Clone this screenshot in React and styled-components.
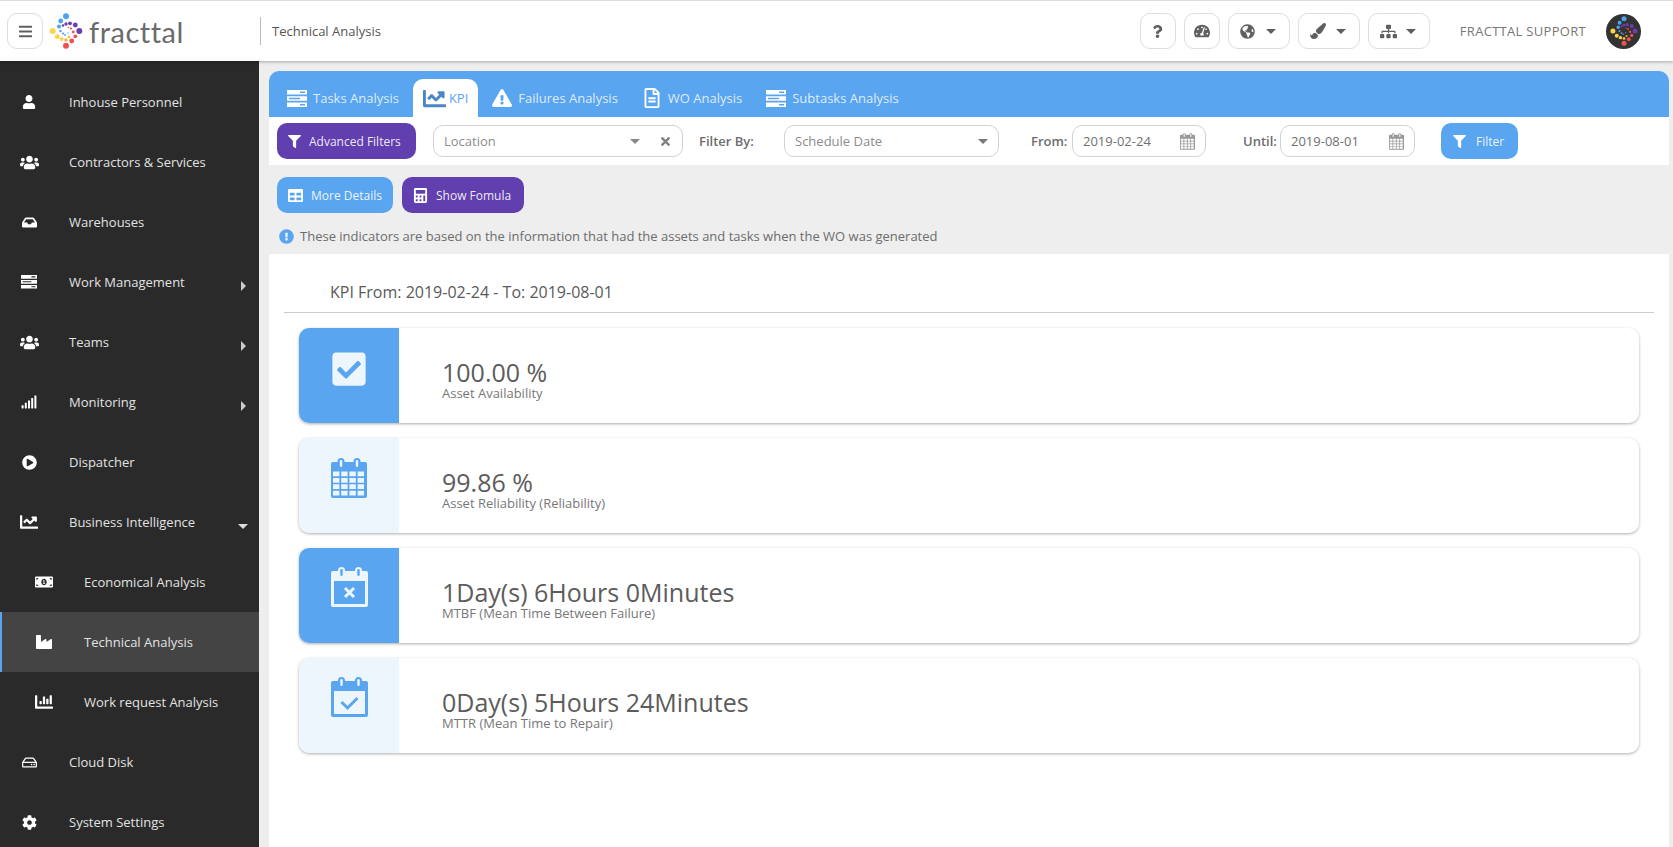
import React from 'react'
import styled, { createGlobalStyle } from 'styled-components'
import {
    FaBars, FaQuestion, FaTachometerAlt, FaGlobeAmericas, FaPaintBrush, FaSitemap, FaUser, FaUsers, FaInbox,
    FaSignal, FaPlayCircle, FaChartLine, FaMoneyBillAlt, FaIndustry, FaChartBar, FaRegHdd, FaCog, FaFilter,
    FaTimes, FaTable, FaCalculator, FaExclamationCircle, FaCheckSquare, FaExclamationTriangle, FaRegFileAlt
} from 'react-icons/fa'

const BLUE = '#5aa5f0'
const PURPLE = '#613fae'
const PALE = '#edf5fd'
const FONT = '"Open Sans", "Liberation Sans", sans-serif'

const GlobalStyle = createGlobalStyle`
    html, body { margin: 0; padding: 0; height: 100%; background: #eee; }
    body { font-family: ${FONT}; color: #666; overflow: hidden; }
    * { box-sizing: border-box; }
`

const Page = styled.div`
    width: 100vw;
    height: 100vh;
    display: flex;
    flex-direction: column;
    overflow: hidden;
`

const Header = styled.header`
    height: 61px;
    flex-shrink: 0;
    display: flex;
    align-items: center;
    background: #fff;
    border-top: 1px solid #ddd;
    padding: 0 32px 0 7px;
    box-shadow: 0 1px 3px rgba(0, 0, 0, .3);
    position: relative;
    z-index: 2;
`

const Brand = styled.div`
    width: 253px;
    display: flex;
    align-items: center;
`

const HeadButton = styled.button`
    height: 36px;
    width: ${({$w}) => $w || 36}px;
    display: flex;
    align-items: center;
    justify-content: ${({$w}) => $w ? 'space-between' : 'center'};
    padding: ${({$w}) => $w ? '0 13px 0 11px' : '0'};
    background: #fff;
    border: 1px solid #ddd;
    border-radius: 10px;
    color: #5f5f5f;
    flex-shrink: 0;
`

const LogoMark = styled.svg`
    width: ${({$size}) => $size}px;
    height: ${({$size}) => $size}px;
    flex-shrink: 0;
`

const LogoWrap = styled.div`
    margin-left: 5px;
    display: flex;
    align-items: center;
`

const LogoText = styled.span`
    margin-left: 5px;
    font-family: "Lato", sans-serif;
    font-size: 29px;
    font-weight: 400;
    color: #6b6b6b;
    line-height: 1;
    letter-spacing: .5px;
`

const PageTitle = styled.div`
    height: 28px;
    display: flex;
    align-items: center;
    border-left: 1px solid #bbb;
    padding-left: 11px;
    font-size: 13px;
    color: #555;
`

const HeadRight = styled.div`
    margin-left: auto;
    display: flex;
    align-items: center;
    gap: 8px;
`

const UserName = styled.span`
    margin-left: 22px;
    font-size: 13px;
    color: #777;
    letter-spacing: .3px;
`

const Avatar = styled.div`
    width: 35px;
    height: 35px;
    margin-left: 12px;
    border-radius: 50%;
    background: #333;
    display: flex;
    align-items: center;
    justify-content: center;
`

const Caret = styled.i`
    display: block;
    width: 0;
    height: 0;
    border-left: 5px solid transparent;
    border-right: 5px solid transparent;
    border-top: 5px solid ${({$color}) => $color || '#5f5f5f'};
`

const Body = styled.div`
    flex: 1;
    min-height: 0;
    display: flex;
`

const Sidebar = styled.nav`
    width: 259px;
    flex-shrink: 0;
    background: #2a2a2a;
    padding-top: 11px;
    overflow: hidden;
`

const NavItem = styled.div`
    height: 60px;
    display: flex;
    align-items: center;
    padding-left: ${({$sub}) => $sub ? 15 : 0}px;
    color: #e2e2e2;
    font-size: 13px;
    background: ${({$active}) => $active ? '#444' : 'transparent'};
    box-shadow: ${({$active}) => $active ? `inset 2px 0 0 ${BLUE}` : 'none'};
`

const NavIcon = styled.span`
    width: 58px;
    margin-right: 11px;
    display: flex;
    justify-content: center;
    color: #fff;
    flex-shrink: 0;
`

const ArrowRight = styled.i`
    margin: 8px 13px 0 auto;
    width: 0;
    height: 0;
    border-top: 5px solid transparent;
    border-bottom: 5px solid transparent;
    border-left: 5px solid #ccc;
`

const ArrowDown = styled.i`
    margin: 8px 11px 0 auto;
    width: 0;
    height: 0;
    border-left: 5px solid transparent;
    border-right: 5px solid transparent;
    border-top: 5px solid #ddd;
`

const Main = styled.main`
    flex: 1;
    min-width: 0;
    padding: 10px 4px 0 10px;
    display: flex;
    flex-direction: column;
`

const TabBar = styled.div`
    height: 46px;
    flex-shrink: 0;
    background: ${BLUE};
    border-radius: 10px 10px 0 0;
    padding-left: 8px;
    display: flex;
    align-items: flex-end;
    gap: 4px;
`

const Tab = styled.div`
    height: 38px;
    padding: 0 10px;
    display: flex;
    align-items: center;
    gap: ${({$active}) => $active ? 3 : 6}px;
    font-size: 13px;
    border-radius: 10px 10px 0 0;
    background: ${({$active}) => $active ? '#fff' : 'transparent'};
    color: ${({$active}) => $active ? BLUE : 'rgba(255, 255, 255, .8)'};
    svg { color: ${({$active}) => $active ? '#4a86c5' : '#fff'}; flex-shrink: 0; }
`

const FilterBar = styled.div`
    height: 48px;
    flex-shrink: 0;
    background: #fff;
    padding-left: 8px;
    display: flex;
    align-items: center;
`

const ActionButton = styled.button`
    height: 36px;
    width: ${({$w}) => $w}px;
    padding: 0 0 0 ${({$pad}) => $pad || 11}px;
    display: flex;
    align-items: center;
    gap: ${({$gap}) => $gap || 8}px;
    border: 0;
    border-radius: 10px;
    background: ${({$purple}) => $purple ? PURPLE : BLUE};
    color: rgba(255, 255, 255, .9);
    font-family: ${FONT};
    font-size: 12px;
    flex-shrink: 0;
    svg { color: #fff; flex-shrink: 0; }
`

const Field = styled.div`
    height: 32px;
    width: ${({$w}) => $w}px;
    margin-left: ${({$ml}) => $ml || 0}px;
    padding: 0 10px;
    display: flex;
    align-items: center;
    border: 1px solid #d2d2d2;
    border-radius: 10px;
    font-size: 13px;
    color: ${({$muted}) => $muted ? '#8c8c8c' : '#707070'};
    flex-shrink: 0;
`

const FieldText = styled.span`
    flex: 1;
`

const FieldClear = styled.span`
    display: flex;
    margin-left: 19px;
    color: #808080;
`

const FilterLabel = styled.label`
    margin-left: ${({$ml}) => $ml}px;
    width: ${({$w}) => $w}px;
    font-size: 13px;
    font-weight: 600;
    color: #6d6d6d;
    flex-shrink: 0;
`

const InfoArea = styled.section`
    height: 89px;
    flex-shrink: 0;
    background: #eee;
    padding: 12px 0 0 8px;
`

const ButtonRow = styled.div`
    display: flex;
    gap: 9px;
`

const InfoLine = styled.p`
    margin: 14px 0 0 2px;
    display: flex;
    align-items: center;
    gap: 6px;
    font-size: 13px;
    line-height: 18px;
    color: #6c6c6c;
    svg { color: ${BLUE}; }
`

const Report = styled.section`
    flex: 1;
    min-height: 0;
    background: #fff;
`

const ReportTitle = styled.h2`
    margin: 0 15px;
    height: 59px;
    padding: 27px 0 0 46px;
    border-bottom: 1px solid #ccc;
    font-size: 16px;
    line-height: 22px;
    font-weight: 500;
    color: #5a5a5a;
`

const CardList = styled.div`
    padding: 15px 30px 0;
    display: flex;
    flex-direction: column;
    gap: 15px;
`

const Card = styled.article`
    height: 95px;
    display: flex;
    border-radius: 10px;
    background: #fff;
    overflow: hidden;
    box-shadow: 0 1px 3px rgba(0, 0, 0, .32);
`

const CardIcon = styled.div`
    width: 100px;
    flex-shrink: 0;
    padding-top: ${({$top}) => $top}px;
    display: flex;
    justify-content: center;
    background: ${({$solid}) => $solid ? BLUE : PALE};
    color: ${({$solid}) => $solid ? PALE : BLUE};
`

const CardBody = styled.div`
    padding: 8px 0 0 43px;
    display: flex;
    flex-direction: column;
    justify-content: center;
`

const CardValue = styled.div`
    font-size: 25px;
    line-height: 28px;
    font-weight: 400;
    color: #5c5c5c;
`

const CardLabel = styled.div`
    font-size: 13px;
    line-height: 15px;
    color: #777;
`

const DOTS = [
    [0, -14.7, 3, '#4ea3ee'], [-5.3, -10, 2.4, '#4ea3ee'], [-7, -4.5, 2, '#4ea3ee'], [-5.5, 0, 1.2, '#4ea3ee'],
    [-3, 2.5, 1.1, '#4ea3ee'], [-1, 4, .9, '#4ea3ee'], [2, 2, .7, '#4ea3ee'],
    [13.3, 0, 3, '#6b3fae'], [9.3, -6, 2.4, '#6b3fae'], [4, -7.7, 1.9, '#6b3fae'], [0, -7, 1.7, '#6b3fae'], [-3, -5.5, 1.3, '#6b3fae'],
    [-13.3, 0, 3, '#f9d548'], [-8.7, 5.7, 2.4, '#f9d548'], [-4.3, 8, 2, '#f9d548'], [0, 9, 1.7, '#f4b13c'], [3, 6, 1.2, '#f4b13c'],
    [0, 14.7, 3, '#ee5350'], [5.7, 10, 2.4, '#ee5350'], [9.3, 5.3, 1.9, '#ee5350'], [7.3, 1, 1.4, '#ee5350'], [5, -2.5, 1.1, '#ee5350'], [2.5, -3.5, .8, '#ee5350'],
]

const Logo = ({size}) => (
    <LogoMark $size={size} viewBox="-18 -18 36 36">
        {DOTS.map(([x, y, r, c], i) => <circle key={i} cx={x} cy={y} r={r} fill={c}/>)}
    </LogoMark>
)

const ServerIcon = ({size = 20}) => (
    <svg width={size} height={size * .85} viewBox="0 0 20 17" fill="currentColor" fillRule="evenodd">
        <path d="M0 0h20v4.6H0z M13 1.6h5v1.4h-5z"/>
        <path d="M0 6.2h20v4.6H0z M2 7.8h11v1.4H2z"/>
        <path d="M0 12.4h20V17H0z M13 14h5v1.4h-5z"/>
    </svg>
)

// grid calendar, ring pegs on top
const GridCalendar = ({w, h, color = 'currentColor', ring = PALE}) => {
    let holes = ''
    for (let row = 0; row < 4; row++) {
        for (let col = 0; col < 4; col++) {
            holes += `M${2 + col * 8.2} ${13.5 + row * 6.4}h6.4v4.8h-6.4z `
        }
    }
    return (
        <svg width={w} height={h} viewBox="0 0 36 40">
            <path fillRule="evenodd" fill={color} d={`M2 4h32a2 2 0 0 1 2 2v32a2 2 0 0 1-2 2H2a2 2 0 0 1-2-2V6a2 2 0 0 1 2-2z ${holes}`}/>
            <rect x="6.5" y="0" width="7" height="11" rx="3.5" fill={color}/>
            <rect x="22.5" y="0" width="7" height="11" rx="3.5" fill={color}/>
            <rect x="8.8" y="2" width="2.4" height="7" rx="1.2" fill={ring}/>
            <rect x="24.8" y="2" width="2.4" height="7" rx="1.2" fill={ring}/>
        </svg>
    )
}

const OutlineCalendar = ({ring, children}) => (
    <svg width="37" height="40" viewBox="0 0 37 40" fill="currentColor">
        <path fillRule="evenodd" d="M2 4h33a2 2 0 0 1 2 2v32a2 2 0 0 1-2 2H2a2 2 0 0 1-2-2V6a2 2 0 0 1 2-2z M3 14v23h31V14z"/>
        <rect x="7" y="0" width="7" height="11" rx="3.5"/>
        <rect x="24" y="0" width="7" height="11" rx="3.5"/>
        <rect x="9.3" y="2" width="2.4" height="7" rx="1.2" fill={ring}/>
        <rect x="26.3" y="2" width="2.4" height="7" rx="1.2" fill={ring}/>
        {children}
    </svg>
)

const NAV = [
    {label: 'Inhouse Personnel', icon: <FaUser size={14}/>},
    {label: 'Contractors & Services', icon: <FaUsers size={19}/>},
    {label: 'Warehouses', icon: <FaInbox size={15}/>},
    {label: 'Work Management', icon: <ServerIcon size={16}/>, arrow: 'right'},
    {label: 'Teams', icon: <FaUsers size={19}/>, arrow: 'right'},
    {label: 'Monitoring', icon: <FaSignal size={16}/>, arrow: 'right'},
    {label: 'Dispatcher', icon: <FaPlayCircle size={15}/>},
    {label: 'Business Intelligence', icon: <FaChartLine size={18}/>, arrow: 'down'},
    {label: 'Economical Analysis', icon: <FaMoneyBillAlt size={18}/>, sub: true},
    {label: 'Technical Analysis', icon: <FaIndustry size={16}/>, sub: true, active: true},
    {label: 'Work request Analysis', icon: <FaChartBar size={18}/>, sub: true},
    {label: 'Cloud Disk', icon: <FaRegHdd size={15}/>},
    {label: 'System Settings', icon: <FaCog size={15}/>},
]

const TABS = [
    {label: 'Tasks Analysis', icon: <ServerIcon/>},
    {label: 'KPI', icon: <FaChartLine size={23}/>, active: true},
    {label: 'Failures Analysis', icon: <FaExclamationTriangle size={20}/>},
    {label: 'WO Analysis', icon: <FaRegFileAlt size={20}/>},
    {label: 'Subtasks Analysis', icon: <ServerIcon/>},
]

const KPIS = [
    {
        value: '100.00 %', label: 'Asset Availability', solid: true, top: 22,
        icon: <FaCheckSquare size={38}/>,
    },
    {
        value: '99.86 %', label: 'Asset Reliability (Reliability)', top: 20,
        icon: <GridCalendar w={36} h={40}/>,
    },
    {
        value: '1Day(s) 6Hours 0Minutes', label: 'MTBF (Mean Time Between Failure)', solid: true, top: 19,
        icon: (
            <OutlineCalendar ring={BLUE}>
                <path d="M14 21l9 9M23 21l-9 9" stroke={PALE} strokeWidth="3" fill="none"/>
            </OutlineCalendar>
        ),
    },
    {
        value: '0Day(s) 5Hours 24Minutes', label: 'MTTR (Mean Time to Repair)', top: 19,
        icon: (
            <OutlineCalendar ring={PALE}>
                <path d="M10.5 25l6 6 10-10" stroke={BLUE} strokeWidth="3" fill="none"/>
            </OutlineCalendar>
        ),
    },
]

const App = () => (
    <Page>
        <GlobalStyle/>
        <Header>
            <Brand>
                <HeadButton><FaBars size={15}/></HeadButton>
                <LogoWrap>
                    <Logo size={36}/>
                    <LogoText>fracttal</LogoText>
                </LogoWrap>
            </Brand>
            <PageTitle>Technical Analysis</PageTitle>
            <HeadRight>
                <HeadButton><FaQuestion size={13}/></HeadButton>
                <HeadButton><FaTachometerAlt size={16}/></HeadButton>
                <HeadButton $w={62}><FaGlobeAmericas size={15}/><Caret/></HeadButton>
                <HeadButton $w={62}><FaPaintBrush size={16}/><Caret/></HeadButton>
                <HeadButton $w={62}><FaSitemap size={17}/><Caret/></HeadButton>
                <UserName>FRACTTAL SUPPORT</UserName>
                <Avatar><Logo size={30}/></Avatar>
            </HeadRight>
        </Header>
        <Body>
            <Sidebar>
                {NAV.map(item => (
                    <NavItem key={item.label} $sub={item.sub} $active={item.active}>
                        <NavIcon>{item.icon}</NavIcon>
                        {item.label}
                        {item.arrow === 'right' && <ArrowRight/>}
                        {item.arrow === 'down' && <ArrowDown/>}
                    </NavItem>
                ))}
            </Sidebar>
            <Main>
                <TabBar>
                    {TABS.map(tab => (
                        <Tab key={tab.label} $active={tab.active}>{tab.icon}{tab.label}</Tab>
                    ))}
                </TabBar>
                <FilterBar>
                    <ActionButton $purple $w={139}><FaFilter size={13}/>Advanced Filters</ActionButton>
                    <Field $w={250} $ml={17} $muted>
                        <FieldText>Location</FieldText>
                        <Caret $color="#888"/>
                        <FieldClear><FaTimes size={13}/></FieldClear>
                    </Field>
                    <FilterLabel $ml={16} $w={85}>Filter By:</FilterLabel>
                    <Field $w={215} $muted>
                        <FieldText>Schedule Date</FieldText>
                        <Caret $color="#777"/>
                    </Field>
                    <FilterLabel $ml={32} $w={41}>From:</FilterLabel>
                    <Field $w={134}>
                        <FieldText>2019-02-24</FieldText>
                        <GridCalendar w={15} h={17} color="#999" ring="#fff"/>
                    </Field>
                    <FilterLabel $ml={37} $w={37}>Until:</FilterLabel>
                    <Field $w={135}>
                        <FieldText>2019-08-01</FieldText>
                        <GridCalendar w={15} h={17} color="#999" ring="#fff"/>
                    </Field>
                    <ActionButton $w={77} $pad={12} $gap={10} style={{marginLeft: 26}}><FaFilter size={13}/>Filter</ActionButton>
                </FilterBar>
                <InfoArea>
                    <ButtonRow>
                        <ActionButton $w={116}><FaTable size={15}/>More Details</ActionButton>
                        <ActionButton $purple $w={122}><FaCalculator size={15}/>Show Fomula</ActionButton>
                    </ButtonRow>
                    <InfoLine><FaExclamationCircle size={15}/>These indicators are based on the information that had the assets and tasks when the WO was generated</InfoLine>
                </InfoArea>
                <Report>
                    <ReportTitle>KPI From: 2019-02-24 - To: 2019-08-01</ReportTitle>
                    <CardList>
                        {KPIS.map(kpi => (
                            <Card key={kpi.label}>
                                <CardIcon $solid={kpi.solid} $top={kpi.top}>{kpi.icon}</CardIcon>
                                <CardBody>
                                    <CardValue>{kpi.value}</CardValue>
                                    <CardLabel>{kpi.label}</CardLabel>
                                </CardBody>
                            </Card>
                        ))}
                    </CardList>
                </Report>
            </Main>
        </Body>
    </Page>
)

export default App
